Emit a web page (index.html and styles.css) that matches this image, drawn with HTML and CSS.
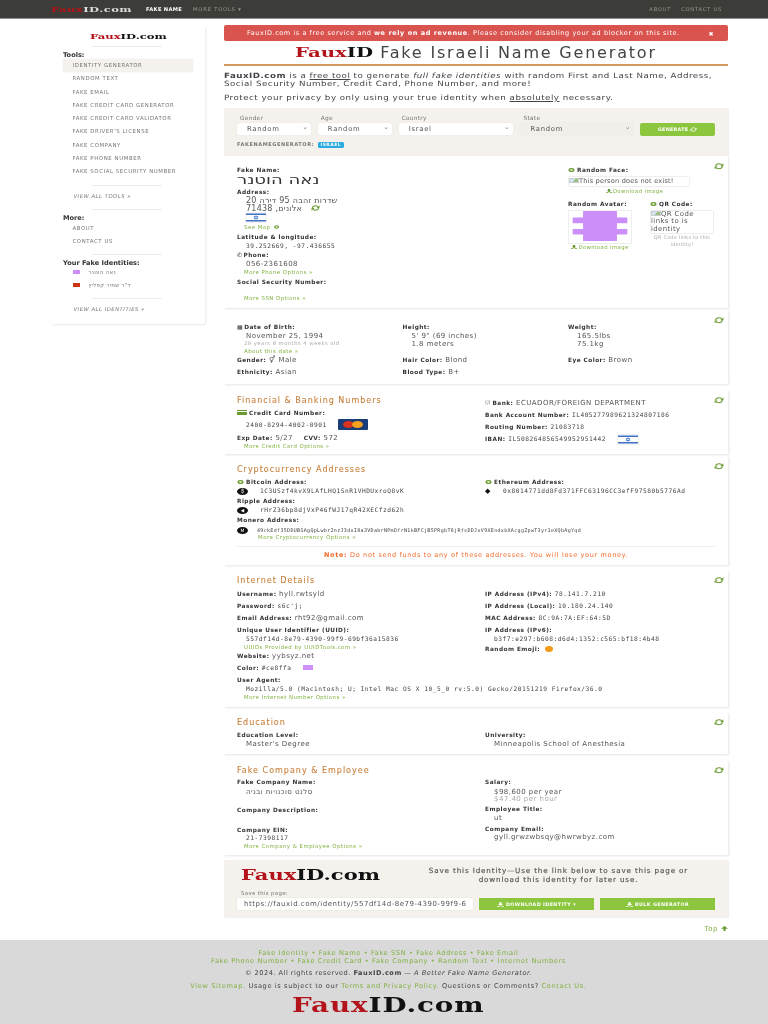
FILE: index.html
```html
<!DOCTYPE html>
<html lang="en">
<head>
<meta charset="utf-8">
<title>Fake Israeli Name Generator</title>
<link rel="stylesheet" href="styles.css">
</head>
<body>
<svg class="defs" width="0" height="0" aria-hidden="true">
  <symbol id="refresh" viewBox="0 0 16 10"><path d="M2.500 5C3 2.500 5.500 1 8 1c1.800 0 3.200.5 4.200 1.500M13.500 5C13 7.500 10.500 9 8 9c-1.800 0-3.200-.5-4.200-1.500" fill="none" stroke="currentColor" stroke-width="1.900"/><path d="M15 .2v4.600h-5zM1 9.800V5.200h5z" fill="currentColor"/></symbol>
  <symbol id="dl" viewBox="0 0 12 8"><path d="M4 0h4v3h2.500L6 6.500 1.500 3H4zM0 6.500h3L6 8l3-1.500h3V8H0z" fill="currentColor"/></symbol>
  <symbol id="flag" viewBox="0 0 20 9"><rect width="20" height="9" fill="#fff"/><rect y="0.500" width="20" height="1.500" fill="#3b6fc4"/><rect y="7" width="20" height="1.500" fill="#3b6fc4"/><path d="M10 2.500l2 3h-4zM10 6.500l2-3h-4z" fill="none" stroke="#3b6fc4" stroke-width=".6"/></symbol>
  <symbol id="qmark" viewBox="0 0 9 6"><ellipse cx="4.500" cy="3" rx="4.500" ry="3" fill="#6a9a30"/><ellipse cx="4.500" cy="3" rx="2" ry="1.300" fill="#fff"/></symbol>
  <symbol id="up" viewBox="0 0 10 7"><path d="M5 0l5 4H6.500v3h-3V4H0z" fill="currentColor"/></symbol>
</svg>

<header class="navbar">
  <a class="brand"><span class="logo logo-nav"><span class="red">Faux</span>ID.com</span></a>
  <nav class="nav-left"><a class="nav-on">FAKE NAME</a><a>MORE TOOLS ▾</a></nav>
  <nav class="nav-right"><a>ABOUT</a><a>CONTACT US</a></nav>
</header>

<div class="wrap">
  <aside class="side">
    <div class="side-logo"><span class="logo logo-side"><span class="red">Faux</span>ID.com</span></div>
    <hr class="rule rule-first">
    <div class="side-h side-h-tools">Tools:</div>
    <ul class="menu">
      <li class="on">IDENTITY GENERATOR</li>
      <li>RANDOM TEXT</li>
      <li>FAKE EMAIL</li>
      <li>FAKE CREDIT CARD GENERATOR</li>
      <li>FAKE CREDIT CARD VALIDATOR</li>
      <li>FAKE DRIVER'S LICENSE</li>
      <li>FAKE COMPANY</li>
      <li>FAKE PHONE NUMBER</li>
      <li>FAKE SOCIAL SECURITY NUMBER</li>
    </ul>
    <hr class="rule">
    <div class="view-all">VIEW ALL TOOLS »</div>
    <hr class="rule">
    <div class="side-h">More:</div>
    <ul class="menu">
      <li>ABOUT</li>
      <li>CONTACT US</li>
    </ul>
    <hr class="rule">
    <div class="side-h">Your Fake Identities:</div>
    <ul class="menu ids">
      <li><i class="sw sw-purple"></i><span dir="rtl">נאה הוטנר</span></li>
      <li><i class="sw sw-red"></i><span dir="rtl">ד"ר שמיר קפליץ</span></li>
    </ul>
    <hr class="rule">
    <div class="view-all">VIEW ALL IDENTITIES »</div>
  </aside>

  <main class="main">
    <div class="alert"><span>FauxID.com is a free service and <b>we rely on ad revenue</b>. Please consider disabling your ad blocker on this site.</span><b class="x">✖</b></div>
    <h1 class="title"><span class="logo logo-h1"><span class="red">Faux</span>ID</span><span>Fake Israeli Name Generator</span></h1>
    <p class="lead"><b>FauxID.com</b> is a <u>free tool</u> to generate <em>full fake identities</em> with random First and Last Name, Address,<br>Social Security Number, Credit Card, Phone Number, and more!</p>
    <p class="lead lead2">Protect your privacy by only using your true identity when <u>absolutely</u> necessary.</p>

    <form class="gen">
      <div class="gen-row">
        <label class="g g-gender"><span>Gender</span><div class="sel">Random<i>⌄</i></div></label>
        <label class="g g-age"><span>Age</span><div class="sel">Random<i>⌄</i></div></label>
        <label class="g g-country"><span>Country</span><div class="sel">Israel<i>⌄</i></div></label>
        <label class="g g-state"><span>State</span><div class="sel sel-off">Random<i>⌄</i></div></label>
        <div class="gen-btn">GENERATE <svg class="ic-btn"><use href="#refresh"/></svg></div>
      </div>
      <div class="gen-foot">FAKENAMEGENERATOR: <span class="badge">ISRAEL</span></div>
    </form>

    <section class="card c-id">
      <svg class="re"><use href="#refresh"/></svg>
      <div class="id-left">
        <div class="l">Fake Name:</div>
        <div class="name"><span dir="rtl">נאה הוטנר</span></div>
        <div class="l mt2">Address:</div>
        <div class="v v-he mt1"><span dir="rtl">שדרות זהבה 95 דירה 20</span></div>
        <div class="v v-he"><span dir="rtl">אלונים, 71438</span><svg class="re-in"><use href="#refresh"/></svg></div>
        <svg class="flag flag-addr"><use href="#flag"/></svg>
        <div class="more mt1">See Map <svg class="qm"><use href="#qmark"/></svg></div>
        <div class="l mt15">Latitude &amp; longitude:</div>
        <div class="m ind mt15">39.252669, -97.436655</div>
        <div class="l mt1"><span class="glyph">✆</span>Phone:</div>
        <div class="v ind mt1">056-2361608</div>
        <div class="more">More Phone Options »</div>
        <div class="l mt2">Social Security Number:</div>
        <div class="more mt8">More SSN Options »</div>
      </div>
      <div class="id-right">
        <div class="face-col">
          <div class="l"><svg class="qm qm-l"><use href="#qmark"/></svg>Random Face:</div>
          <div class="brk brk-face"><i class="broken"></i>This person does not exist!</div>
          <div class="dlk dlk-face"><svg class="dlg"><use href="#dl"/></svg>Download Image</div>
          <div class="pair">
            <div class="av-col">
              <div class="l">Random Avatar:</div>
              <div class="avatar"><svg viewBox="0 0 64 34" width="62" height="32"><path d="M14 0h36v7h11v6H50v6h11v6H50v7H14v-7H3v-6h11v-6H3V7h11z" fill="#cc8ffa"/></svg></div>
              <div class="dlk"><svg class="dlg"><use href="#dl"/></svg>Download Image</div>
            </div>
            <div class="qr-col">
              <div class="l"><svg class="qm qm-l"><use href="#qmark"/></svg>QR Code:</div>
              <div class="brk brk-qr"><i class="broken"></i>QR Code<br>links to is<br>identity</div>
              <div class="qr-note">QR Code links to this identity!</div>
            </div>
          </div>
        </div>
      </div>
    </section>

    <section class="card c-body">
      <svg class="re"><use href="#refresh"/></svg>
      <div class="g3">
        <div>
          <div class="l"><span class="glyph">▦</span>Date of Birth:</div>
          <div class="v ind mt1">November 25, 1994</div>
          <div class="sm">29 years 8 months 4 weeks old</div>
          <div class="more more-short">About this date »</div>
        </div>
        <div>
          <div class="l">Height:</div>
          <div class="v ind mt1">5' 9" (69 inches)</div>
          <div class="v ind">1.8 meters</div>
        </div>
        <div>
          <div class="l">Weight:</div>
          <div class="v ind mt1">165.5lbs</div>
          <div class="v ind">75.1kg</div>
        </div>
        <div class="il"><b>Gender:</b> ⚥ Male</div>
        <div class="il"><b>Hair Color:</b> Blond</div>
        <div class="il"><b>Eye Color:</b> Brown</div>
        <div class="il"><b>Ethnicity:</b> Asian</div>
        <div class="il"><b>Blood Type:</b> B+</div>
      </div>
    </section>

    <section class="card c-fin">
      <svg class="re"><use href="#refresh"/></svg>
      <div class="g2">
        <div>
          <h2>Financial &amp; Banking Numbers</h2>
          <div class="l cc-lab"><i class="cc-ic"></i>Credit Card Number:</div>
          <div class="cc-line"><span class="m ind">2400-8294-4002-0901</span><span class="mc"><i class="mc-a"></i><i class="mc-b"></i></span></div>
          <div class="il cc-exp"><b>Exp Date:</b> 5/27 &nbsp; &nbsp;<b>CVV:</b> 572</div>
          <div class="more">More Credit Card Options »</div>
        </div>
        <div class="fin-r">
          <div class="il"><span class="glyph">⛫</span><b>Bank:</b> ECUADOR/FOREIGN DEPARTMENT</div>
          <div class="il gap12"><b>Bank Account Number:</b> <span class="m">IL405277989621324807186</span></div>
          <div class="il gap12"><b>Routing Number:</b> <span class="m">21083718</span></div>
          <div class="il gap12"><b>IBAN:</b> <span class="m">IL508264856549952951442</span><svg class="flag flag-iban"><use href="#flag"/></svg></div>
        </div>
      </div>
    </section>

    <section class="card c-cry">
      <svg class="re"><use href="#refresh"/></svg>
      <h2>Cryptocurrency Addresses</h2>
      <div class="g2 mt4">
        <div>
          <div class="l"><svg class="qm qm-l"><use href="#qmark"/></svg>Bitcoin Address:</div>
          <div class="cr"><i class="coin">₿</i><span class="m">1C3USzf4kvX9LAfLHQ1SnR1VHDUxroQ8vK</span></div>
          <div class="l">Ripple Address:</div>
          <div class="cr"><i class="coin">◀</i><span class="m">rHrZ36bp8djVxP46fWJ17qR42XECfzd62h</span></div>
          <div class="l">Monero Address:</div>
        </div>
        <div>
          <div class="l"><svg class="qm qm-l"><use href="#qmark"/></svg>Ethereum Address:</div>
          <div class="cr"><i class="eth">◆</i><span class="m">0x8014771dd8Fd371FFC63196CC3efF97580b5776Ad</span></div>
        </div>
      </div>
      <div class="cr cr-xmr"><i class="coin">M</i><span class="xmr">49ckEdf35DDUBSAgQpLwbr2nzJ3dxI8a3VDabrNPmDfrN1kBFCjB5PRgbT6jRfsDDJxV9XEndxbXAcggZpwT3yr1eXQbAgYqd</span></div>
      <div class="more more-xmr">More Cryptocurrency Options »</div>
      <hr class="split">
      <p class="note"><b>Note:</b> Do not send funds to any of these addresses. You will lose your money.</p>
    </section>

    <section class="card c-net">
      <svg class="re"><use href="#refresh"/></svg>
      <h2>Internet Details</h2>
      <div class="g2 mt5">
        <div>
          <div class="il"><b>Username:</b> hyll.rwtsyld</div>
          <div class="il gap12"><b>Password:</b> <span class="m">s6c'j;</span></div>
          <div class="il gap12"><b>Email Address:</b> rht92@gmail.com</div>
          <div class="l gap12">Unique User Identifier (UUID):</div>
          <div class="m ind mt1">557df14d-8e79-4390-99f9-69bf36a15836</div>
          <div class="more">UUIDs Provided by UUIDTools.com »</div>
          <div class="il mt1"><b>Website:</b> yybsyz.net</div>
          <div class="il gap12"><b>Color:</b> <span class="m">#ce8ffa</span><i class="sw sw-color"></i></div>
        </div>
        <div>
          <div class="il"><b>IP Address (IPv4):</b> <span class="m">78.141.7.210</span></div>
          <div class="il gap12"><b>IP Address (Local):</b> <span class="m">10.180.24.140</span></div>
          <div class="il gap12"><b>MAC Address:</b> <span class="m">8C:9A:7A:EF:64:5D</span></div>
          <div class="l gap12">IP Address (IPv6):</div>
          <div class="m ind mt1">b3f7:e297:b608:d6d4:1352:c565:bf18:4b48</div>
          <div class="il mt2"><b>Random Emoji:</b> <i class="emoji"></i></div>
        </div>
      </div>
      <div class="l gap12">User Agent:</div>
      <div class="m ind mt1">Mozilla/5.0 (Macintosh; U; Intel Mac OS X 10_5_0 rv:5.0) Gecko/20151219 Firefox/36.0</div>
      <div class="more">More Internet Number Options »</div>
    </section>

    <section class="card c-edu">
      <svg class="re"><use href="#refresh"/></svg>
      <h2>Education</h2>
      <div class="g2 mt45">
        <div><div class="l">Education Level:</div><div class="v ind mt1">Master's Degree</div></div>
        <div><div class="l">University:</div><div class="v ind mt1">Minneapolis School of Anesthesia</div></div>
      </div>
    </section>

    <section class="card c-co">
      <svg class="re"><use href="#refresh"/></svg>
      <h2>Fake Company &amp; Employee</h2>
      <div class="g2 mt25">
        <div>
          <div class="l">Fake Company Name:</div>
          <div class="v ind mt2 v-co"><span dir="rtl">סלנט סוכנויות ובניה</span></div>
          <div class="l co-desc">Company Description:</div>
          <div class="l co-ein">Company EIN:</div>
          <div class="m ind">21-7398117</div>
          <div class="more">More Company &amp; Employee Options »</div>
        </div>
        <div>
          <div class="l">Salary:</div>
          <div class="v ind mt2">$98,600 per year</div>
          <div class="v ind muted">$47.40 per hour</div>
          <div class="l mt2">Employee Title:</div>
          <div class="v ind mt1">ut</div>
          <div class="l mt3">Company Email:</div>
          <div class="v ind">gyll.grwzwbsqy@hwrwbyz.com</div>
        </div>
      </div>
    </section>

    <section class="save">
      <div class="save-top">
        <div class="save-logo"><span class="logo logo-save"><span class="red">Faux</span>ID.com</span></div>
        <p class="save-txt">Save this Identity—Use the link below to save this page or<br>download this identity for later use.</p>
      </div>
      <div class="save-lab">Save this page:</div>
      <div class="save-row">
        <div class="save-url">https://fauxid.com/identity/557df14d-8e79-4390-99f9-6</div>
        <div class="btn"><svg class="dlg dlg-w"><use href="#dl"/></svg>DOWNLOAD IDENTITY ▾</div>
        <div class="btn"><svg class="dlg dlg-w"><use href="#dl"/></svg>BULK GENERATOR</div>
      </div>
    </section>

    <div class="top">Top <svg class="arrow"><use href="#up"/></svg></div>
  </main>
</div>

<footer class="foot">
  <p class="foot-links">Fake Identity • Fake Name • Fake SSN • Fake Address • Fake Email<br>Fake Phone Number • Fake Credit Card • Fake Company • Random Text • Internet Numbers</p>
  <p class="foot-c">© 2024. All rights reserved. <b>FauxID.com</b> — <em>A Better Fake Name Generator.</em></p>
  <p class="foot-u"><a>View Sitemap.</a> Usage is subject to our <a>Terms and Privacy Policy.</a> Questions or Comments? <a>Contact Us.</a></p>
  <div class="foot-logo"><span class="logo logo-foot"><span class="red">Faux</span>ID.com</span></div>
</footer>
</body>
</html>
```
FILE: styles.css
```css
* { box-sizing: border-box; }
html, body { margin: 0; padding: 0; }
body { font-family: "DejaVu Sans", "Noto Sans", sans-serif; font-size: 8px; color: #444; background: #fff; height: 1024px; overflow: hidden; filter: blur(.3px); }
.defs { position: absolute; }
p, h1, h2, ul { margin: 0; padding: 0; }
ul { list-style: none; }
i { font-style: normal; }

/* logo */
.logo { display: inline-block; font-family: "DejaVu Serif", serif; font-weight: 700; color: #111; white-space: nowrap; transform: scaleX(1.45); }
.red { color: #b3131b; }
.logo-nav { font-size: 8px; transform-origin: left center; color: #ddd; }
.logo-side { font-size: 8px; }
.logo-h1 { font-size: 13.600px; transform-origin: left center; width: 85px; }
.logo-save { font-size: 14.500px; transform-origin: left center; }
.logo-foot { font-size: 20px; transform: scaleX(1.39); }

/* navbar */
.navbar { height: 19px; background: #3c3c38; border-bottom: 1px solid #8e8e8c; display: flex; align-items: center; padding: 0 46px 1px 51px; font-size: 5.200px; letter-spacing: .3px; color: #99998f; }
.brand { width: 95px; }
.nav-left { display: flex; gap: 11px; }
.nav-left a + a { letter-spacing: .8px; }
.nav-on { color: #fff; font-weight: 700; }
.nav-right { margin-left: auto; display: flex; gap: 10px; letter-spacing: .75px; }

/* layout */
.wrap { display: flex; gap: 19px; padding: 6px 0 0 51px; height: 921px; }
.side { width: 154px; height: 298px; margin-top: 1px; border-radius: 2px; box-shadow: 1px 1px 2px rgba(120,110,90,.16); padding: 0 12px; display: flex; flex-direction: column; }
.main { width: 504px; }

/* sidebar */
.side-logo { text-align: center; height: 20px; line-height: 20px; }
.rule { width: 70px; height: 1px; border: 0; background: #ececec; margin: 0 0 0 29px; flex: none; }
.rule-first { margin-bottom: 4px; }
.side-h { font-weight: 700; font-size: 6.600px; line-height: 8px; color: #333; margin-top: 4px; }
.side-h-tools { margin-top: 0; }
.menu li { height: 13.300px; line-height: 13px; padding-left: 9.500px; font-size: 5.400px; letter-spacing: .58px; color: #777; white-space: nowrap; }
.menu li.on { background: #f5f2ed; box-shadow: 0 0 1px rgba(0,0,0,.2); border-radius: 1px; }
.menu { margin-bottom: 6px; margin-top: 0; }
.ids { margin-top: -1px; }
.ids li { height: 13px; line-height: 12px; }
.ids span { letter-spacing: .3px; }
.view-all { font-style: italic; font-size: 5.300px; letter-spacing: .5px; color: #777; padding-left: 10.500px; height: 23px; line-height: 21px; }
.ids .sw { margin-right: 9px; }
.sw { display: inline-block; width: 7px; height: 4px; vertical-align: 0; }
.sw-purple { background: #cc8ffa; }
.sw-red { background: #cc3311; }

/* head */
.alert { height: 16px; background: #d9534f; color: #fff; border-radius: 2px; font-size: 6.500px; letter-spacing: .58px; display: flex; align-items: center; padding: 0 14px 0 23px; justify-content: space-between; white-space: nowrap; }
.x { font-size: 6px; }
.title { height: 24.500px; border-bottom: 2px solid #d29a5e; display: flex; justify-content: center; align-items: center; font-weight: 400; font-size: 16px; letter-spacing: 1.800px; color: #444; white-space: nowrap; }
.logo-h1 { letter-spacing: 0; }
.lead { font-size: 7.300px; letter-spacing: .42px; line-height: 8.500px; margin-top: 6px; color: #444; width: 424px; transform: scaleX(1.19); transform-origin: left center; white-space: nowrap; }
.lead2 { margin-top: 5px; }

/* form */
.gen { height: 47px; margin-top: 6px; background: #f5f2ed; padding: 6px 13px 0; box-shadow: 1px 1px 1px rgba(0,0,0,.06); }
.gen-row { display: flex; height: 21px; }
.g { display: block; font-size: 5.800px; color: #777; letter-spacing: .3px; }
.g > span { display: block; height: 9px; line-height: 8px; padding-left: 3px; }
.g-gender { width: 81px; } .g-age { width: 81px; } .g-country { width: 122px; } .g-state { width: 120px; }
.sel { height: 12px; line-height: 12px; background: #fff; padding-left: 10px; font-size: 6.800px; letter-spacing: .75px; color: #555; border-radius: 2px; position: relative; box-shadow: 0 0 1px rgba(0,0,0,.15); }
.g-gender .sel, .g-age .sel { width: 74px; } .g-country .sel { width: 114px; } .g-state .sel { width: 113px; }
.sel-off { background: #f2efea; }
.sel i { position: absolute; right: 3px; top: -2px; color: #888; letter-spacing: 0; }
.gen-btn { width: 75px; height: 13px; margin-top: 8.500px; background: #8cc63f; color: #fff; border-radius: 2px; font-size: 4.800px; font-weight: 700; letter-spacing: .3px; display: flex; align-items: center; justify-content: center; gap: 2px; }
.ic-btn { width: 7px; height: 5px; color: #fff; }
.gen-foot { margin-top: 5px; height: 8px; line-height: 8px; font-size: 5px; font-weight: 700; color: #777; letter-spacing: .6px; white-space: nowrap; }
.badge { display: inline-block; background: #29abe2; color: #fff; padding: 0 3px; border-radius: 1.500px; height: 5.500px; line-height: 5.500px; margin-left: 1px; font-size: 4.400px; letter-spacing: .5px; }

/* cards */
.card { position: relative; background: #fff; box-shadow: 1px 1px 2px rgba(120,110,90,.18); padding: 10px 13px 0; margin-top: 1px; }
.re { position: absolute; right: 4px; top: 7px; width: 10px; height: 6.500px; color: #6a9a30; }
.c-id { height: 152px; display: flex; }
.c-body { height: 74px; margin-top: 2px; padding-top: 13px; }
.c-fin { height: 64px; margin-top: 6px; padding-top: 6px; }
.c-cry { height: 109px; margin-top: 2px; padding-top: 9px; }
.c-net { height: 137px; margin-top: 5px; padding-top: 6px; }
.c-edu { height: 42px; margin-top: 5px; padding-top: 5.500px; }
.c-co { height: 95px; margin-top: 6px; padding-top: 6px; }

h2 { font-size: 8px; font-weight: 400; letter-spacing: 1px; color: #c8803c; line-height: 9px; -webkit-text-stroke: .1px #c8803c; white-space: nowrap; }
.l, .il b { font-weight: 700; font-size: 5.800px; letter-spacing: .46px; color: #333; }
.l { height: 8px; line-height: 8px; white-space: nowrap; }
.v, .il { font-size: 7px; letter-spacing: .45px; color: #555; line-height: 8px; white-space: nowrap; }
.ind { padding-left: 9px; }
.v-he { padding-left: 9px; position: relative; font-size: 8px; letter-spacing: .25px; }
.m, .xmr { font-family: "DejaVu Sans Mono", "Liberation Mono", monospace; }
.m { font-size: 6.200px; letter-spacing: .52px; color: #444; line-height: 8px; white-space: nowrap; }
.more { font-size: 5.400px; letter-spacing: .48px; color: #7fb03f; line-height: 8px; height: 8px; padding-left: 7px; white-space: nowrap; }
.more-short { height: 5px; }
.sm { font-size: 5.200px; letter-spacing: .5px; color: #aaa; line-height: 7px; padding-left: 7px; white-space: nowrap; }
.muted { color: #aaa; line-height: 7px; }
.glyph { font-size: 6px; color: #333; margin-right: 1px; }
.mt1 { margin-top: 1px; } .mt15 { margin-top: 1.500px; } .mt2 { margin-top: 2px; } .mt25 { margin-top: 2.500px; } .mt3 { margin-top: 3px; } .mt4 { margin-top: 4px; } .mt45 { margin-top: 4.500px; } .mt5 { margin-top: 5px; } .mt8 { margin-top: 8px; }
.gap12 { margin-top: 4px; }

.name { font-size: 12px; height: 12px; line-height: 12px; color: #333; width: 44px; white-space: nowrap; transform: scaleX(1.5); transform-origin: left center; }
.re-in { width: 9px; height: 6px; color: #6a9a30; margin-left: 9px; vertical-align: 0; }
.flag { display: block; width: 20px; height: 9px; box-shadow: 0 0 1px rgba(0,0,0,.3); }
.flag-addr { margin-left: 9px; }
.flag-iban { display: inline-block; margin-left: 12px; vertical-align: -3px; }
.qm { width: 5px; height: 4px; margin-left: 1px; }
.qm-l { margin: 0 2px 0 0; width: 7px; }
.id-left { width: 331px; }
.face-col { width: 146px; }
.brk { border: 1px solid #eee; border-radius: 1.500px; color: #555; font-size: 6.600px; letter-spacing: .2px; box-shadow: 0 0 1px rgba(0,0,0,.1); }
.brk-face { width: 122px; height: 11px; line-height: 9px; margin-top: 2px; white-space: nowrap; }
.broken { display: inline-block; width: 10px; height: 5px; background: linear-gradient(135deg, #cfe4f6 50%, #9bbf7e 50%); border: 1px solid #ccc; vertical-align: 0; }
.dlk { color: #7fb03f; font-size: 5.300px; letter-spacing: .4px; line-height: 7px; height: 8px; text-align: center; white-space: nowrap; }
.dlk-face { padding: 1px 13px 0 0; margin-bottom: 5px; }
.dlg { width: 6px; height: 4px; color: #6a9a30; margin-right: 1px; }
.dlg-w { color: #fff; margin-right: 2px; width: 7px; height: 5px; }
.pair { display: flex; }
.av-col { width: 83px; }
.avatar { width: 64px; height: 34px; border: 1px solid #eee; margin-top: 2px; display: flex; align-items: center; justify-content: center; }
.av-col .dlk { width: 64px; padding-top: 0; }
.qr-col { width: 64px; }
.brk-qr { width: 64px; height: 24px; line-height: 7.300px; margin-top: 2px; margin-bottom: 0; font-size: 6.900px; letter-spacing: .4px; }
.qr-note { font-size: 5px; letter-spacing: .2px; color: #aaa; text-align: center; line-height: 7px; padding-top: 0; }

.g3 { display: grid; grid-template-columns: 165.500px 165.500px 1fr; row-gap: 4px; }
.g2 { display: grid; grid-template-columns: 248px 1fr; }

/* fin */
.cc-lab { margin-top: 4px; }
.cc-ic { display: inline-block; width: 10px; height: 5px; background: linear-gradient(#6a9a30 0 20%, #fff 20% 40%, #6a9a30 40% 100%); margin-right: 2px; }
.cc-line { display: flex; align-items: center; height: 13px; margin-top: 1px; }
.cc-exp { margin-top: 2.500px; }
.mc { width: 30px; height: 11px; background: #1a3c78; margin-left: 11px; border-radius: 1px; position: relative; display: block; }
.mc-a, .mc-b { position: absolute; top: 2px; width: 11px; height: 7px; border-radius: 50%; }
.mc-a { left: 5px; background: #d8331c; }
.mc-b { left: 14px; background: #f3a11e; }
.fin-r { padding-top: 3px; }
.c-fin .il { height: 8px; }

/* crypto */
.cr { display: flex; align-items: center; height: 10px; margin-bottom: 1px; }
.coin { width: 11px; height: 7px; border-radius: 50%; background: #111; color: #fff; font-size: 4.500px; line-height: 7px; text-align: center; margin-right: 12px; flex: none; }
.eth { width: 11px; color: #111; font-size: 7px; margin-right: 7px; }
.xmr { font-size: 5px; letter-spacing: .33px; color: #444; white-space: nowrap; }
.cr-xmr { margin-top: 1px; margin-bottom: 0; }
.cr-xmr .coin { margin-right: 9px; }
.more-xmr { padding-left: 21px; margin-top: -2px; }
.split { border: 0; height: 1px; background: #eee; margin: 5px 0 0; }
.note { text-align: center; color: #f26a2a; font-size: 6.500px; letter-spacing: .67px; line-height: 8px; margin-top: 4px; white-space: nowrap; }

/* net */
.sw-color { background: #ce8ffa; width: 10px; height: 5px; margin-left: 11px; }
.emoji { display: inline-block; width: 8px; height: 6px; border-radius: 50%; background: #f29a1c; margin-left: 2px; vertical-align: -1px; }

/* company */
.co-desc { margin-top: 10px; }
.co-ein { margin-top: 12px; }

/* save */
.save { height: 57px; margin-top: 5px; background: #f5f2ed; padding: 6px 13px 0 14px; box-shadow: 1px 1px 1px rgba(0,0,0,.06); }
.save-top { display: flex; height: 24px; }
.save-logo { width: 165px; padding: 0 0 0 3px; line-height: 17px; }
.save-txt { width: 311px; text-align: center; font-size: 7.200px; letter-spacing: .85px; line-height: 9px; color: #555; -webkit-text-stroke: .15px #555; white-space: nowrap; }
.save-lab { height: 7px; line-height: 7px; margin: 0 0 0 3px; font-size: 5.300px; color: #777; letter-spacing: .4px; }
.save-row { display: flex; gap: 6px; margin-top: 1px; margin-left: -1px; }
.save-url { width: 236px; height: 12px; line-height: 12px; background: #fff; padding-left: 7px; font-size: 7px; letter-spacing: .52px; color: #555; white-space: nowrap; overflow: hidden; box-shadow: 0 0 1px rgba(0,0,0,.15); }
.btn { width: 115px; height: 12px; background: #8cc63f; color: #fff; font-size: 4.800px; font-weight: 700; letter-spacing: .4px; display: flex; align-items: center; justify-content: center; white-space: nowrap; }

.top { height: 23px; text-align: right; line-height: 25px; font-size: 7px; color: #7fb03f; letter-spacing: .6px; }
.arrow { width: 7px; height: 5px; color: #6a9a30; vertical-align: 0; }

/* footer */
.foot { height: 84px; background: #d9d9d9; padding: 8.500px 0 0 9px; text-align: center; font-size: 6.600px; letter-spacing: .63px; color: #444; white-space: nowrap; }
.foot-links { color: #7fb03f; line-height: 8px; }
.foot-c { margin-top: 4px; line-height: 8px; letter-spacing: .5px; }
.foot-u { margin-top: 5px; line-height: 8px; }
.foot-u a { color: #7fb03f; }
.foot-logo { margin-top: 3px; line-height: 24px; height: 24px; }
```
